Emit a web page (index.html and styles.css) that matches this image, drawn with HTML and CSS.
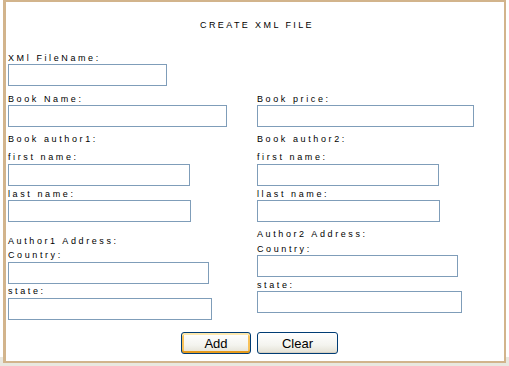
FILE: index.html
```html
<!DOCTYPE html>
<html lang="en">
    <head>
        <meta charset="UTF-8">
        <title>Create XML File</title>
        <link rel="stylesheet" href="styles.css">
    </head>
    <body>
        <form class="frame">
            <div class="title">CREATE XML FILE</div>

            <div class="field top-file">
                <label>XMl FileName:</label>
                <input type="text" class="w-file">
            </div>

            <div class="grid">
                <!-- 左列 -->
                <div class="col">
                    <div class="field">
                        <label>Book Name:</label>
                        <input type="text" class="w-name">
                    </div>
                    <div class="head gap-7">Book author1:</div>
                    <div class="field gap-7">
                        <label>first name:</label>
                        <input type="text" class="w-first drop-1">
                    </div>
                    <div class="field gap-3">
                        <label>last name:</label>
                        <input type="text" class="w-last">
                    </div>
                    <div class="head gap-14">Author1 Address:</div>
                    <div class="field gap-3">
                        <label>Country:</label>
                        <input type="text" class="w-country drop-1">
                    </div>
                    <div class="field gap-2">
                        <label>state:</label>
                        <input type="text" class="w-state drop-1">
                    </div>
                </div>

                <!-- 右列 -->
                <div class="col">
                    <div class="field">
                        <label>Book price:</label>
                        <input type="text" class="w-price">
                    </div>
                    <div class="head gap-7">Book author2:</div>
                    <div class="field gap-7">
                        <label>first name:</label>
                        <input type="text" class="w-first drop-1">
                    </div>
                    <div class="field gap-3">
                        <label>llast name:</label>
                        <input type="text" class="w-last">
                    </div>
                    <div class="head gap-7">Author2 Address:</div>
                    <div class="field gap-4">
                        <label>Country:</label>
                        <input type="text" class="w-country2">
                    </div>
                    <div class="field gap-3">
                        <label>state:</label>
                        <input type="text" class="w-state2">
                    </div>
                </div>
            </div>

            <div class="actions">
                <button type="button" class="btn btn-default">Add</button>
                <button type="reset" class="btn">Clear</button>
            </div>
        </form>
    </body>
</html>
```

FILE: styles.css
```css
* {
    margin: 0;
    padding: 0;
    box-sizing: border-box;
}

html {
    background: linear-gradient(#fff 0, #fff 357px, #e9e8e0 357px);
    min-height: 100%;
}

body {
    font-family: "Liberation Sans", Arial, sans-serif;
    font-size: 9px;
    line-height: 11px;
    letter-spacing: 2.6px;
    color: #000;
}

.frame {
    display: block;
    margin-left: 3px;
    width: 503px;
    height: 363px;
    padding: 18px 0 0 2px;
    background-color: #fff;
    border: 2px solid #d2b48c;
    border-left-width: 3px;
}

.title {
    text-align: center;
    letter-spacing: 2.4px;
    padding-left: 2px;
}

.top-file {
    margin-top: 22px;
}

label,
.head {
    display: block;
    white-space: nowrap;
}

input[type=text] {
    display: block;
    height: 22px;
    border: 1px solid #7f9db9;
    background-color: #fff;
    outline: none;
}

.grid {
    display: grid;
    grid-template-columns: 249px 1fr;
    margin-top: 8px;
}

.gap-2 { margin-top: 2px; }
.gap-3 { margin-top: 3px; }
.gap-4 { margin-top: 4px; }
.gap-7 { margin-top: 7px; }
.gap-14 { margin-top: 14px; }

.drop-1 {
    margin-top: 1px;
}

/* 输入框宽度 */
.w-file { width: 159px; }
.w-name { width: 219px; }
.w-price { width: 217px; }
.w-first { width: 182px; }
.w-last { width: 183px; }
.w-country { width: 201px; }
.w-state { width: 204px; }
.w-country2 { width: 201px; }
.w-state2 { width: 205px; }

/* 按钮 */
.actions {
    display: flex;
    gap: 6px;
    margin-top: 12px;
    padding-left: 173px;
}

.btn {
    height: 22px;
    width: 81px;
    font: 13px "Liberation Sans", Arial, sans-serif;
    letter-spacing: 0;
    color: #000;
    border: 1px solid #003c74;
    border-radius: 3px;
    background: linear-gradient(#ffffff 0%, #f4f4ef 60%, #e3e0d4 100%);
    box-shadow: inset 0 -1px #d6d0c2;
}

.btn-default {
    width: 70px;
    box-shadow: inset 0 2px #fde8ae, inset 0 -2px #e59a1c, inset 2px 0 #f8c25a, inset -2px 0 #f8c25a;
}
```
